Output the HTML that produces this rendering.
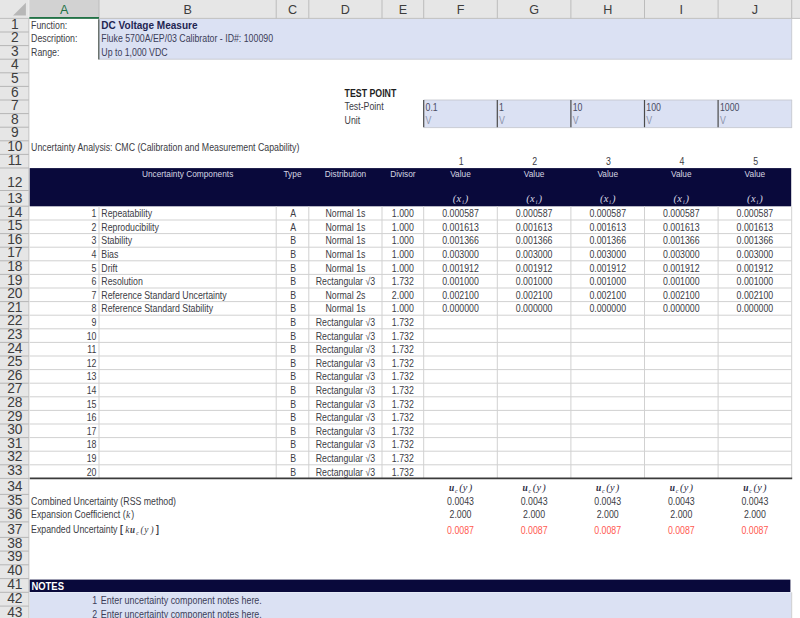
<!DOCTYPE html>
<html lang="en"><head><meta charset="utf-8"><title>Uncertainty Budget - DC Voltage Measure</title>
<style>
html,body{margin:0;padding:0;background:#fff;overflow:hidden}
svg{display:block}
text{font-family:"Liberation Sans",Arial,sans-serif;font-size:10.3px;fill:#3c3c44;white-space:pre}
.se,.se tspan{font-family:"Liberation Serif","Times New Roman",serif;font-style:italic}
</style></head><body>
<svg width="800" height="618" viewBox="0 0 800 618">
<rect x="0.00" y="0.00" width="800.00" height="618.00" fill="#ffffff" />
<rect x="99.00" y="19.00" width="692.70" height="40.20" fill="#dbe1f3" />
<rect x="423.70" y="100.00" width="368.00" height="27.60" fill="#dbe1f3" />
<rect x="29.40" y="592.30" width="762.30" height="25.70" fill="#dbe1f3" />
<rect x="29.40" y="168.10" width="761.80" height="38.20" fill="#09093b" />
<rect x="29.40" y="579.60" width="761.00" height="12.40" fill="#09093b" />
<line x1="29.40" y1="220.00" x2="791.70" y2="220.00" stroke="#d1d1d1" stroke-width="1.0"/>
<line x1="29.40" y1="233.60" x2="791.70" y2="233.60" stroke="#d1d1d1" stroke-width="1.0"/>
<line x1="29.40" y1="247.20" x2="791.70" y2="247.20" stroke="#d1d1d1" stroke-width="1.0"/>
<line x1="29.40" y1="260.80" x2="791.70" y2="260.80" stroke="#d1d1d1" stroke-width="1.0"/>
<line x1="29.40" y1="274.40" x2="791.70" y2="274.40" stroke="#d1d1d1" stroke-width="1.0"/>
<line x1="29.40" y1="288.00" x2="791.70" y2="288.00" stroke="#d1d1d1" stroke-width="1.0"/>
<line x1="29.40" y1="301.60" x2="791.70" y2="301.60" stroke="#d1d1d1" stroke-width="1.0"/>
<line x1="29.40" y1="315.20" x2="791.70" y2="315.20" stroke="#d1d1d1" stroke-width="1.0"/>
<line x1="29.40" y1="328.80" x2="791.70" y2="328.80" stroke="#d1d1d1" stroke-width="1.0"/>
<line x1="29.40" y1="342.40" x2="791.70" y2="342.40" stroke="#d1d1d1" stroke-width="1.0"/>
<line x1="29.40" y1="356.00" x2="791.70" y2="356.00" stroke="#d1d1d1" stroke-width="1.0"/>
<line x1="29.40" y1="369.60" x2="791.70" y2="369.60" stroke="#d1d1d1" stroke-width="1.0"/>
<line x1="29.40" y1="383.20" x2="791.70" y2="383.20" stroke="#d1d1d1" stroke-width="1.0"/>
<line x1="29.40" y1="396.80" x2="791.70" y2="396.80" stroke="#d1d1d1" stroke-width="1.0"/>
<line x1="29.40" y1="410.40" x2="791.70" y2="410.40" stroke="#d1d1d1" stroke-width="1.0"/>
<line x1="29.40" y1="424.00" x2="791.70" y2="424.00" stroke="#d1d1d1" stroke-width="1.0"/>
<line x1="29.40" y1="437.60" x2="791.70" y2="437.60" stroke="#d1d1d1" stroke-width="1.0"/>
<line x1="29.40" y1="451.20" x2="791.70" y2="451.20" stroke="#d1d1d1" stroke-width="1.0"/>
<line x1="29.40" y1="464.80" x2="791.70" y2="464.80" stroke="#d1d1d1" stroke-width="1.0"/>
<line x1="99.00" y1="206.40" x2="99.00" y2="478.40" stroke="#d1d1d1" stroke-width="1.0"/>
<line x1="276.20" y1="206.40" x2="276.20" y2="478.40" stroke="#d1d1d1" stroke-width="1.0"/>
<line x1="308.80" y1="206.40" x2="308.80" y2="478.40" stroke="#d1d1d1" stroke-width="1.0"/>
<line x1="382.00" y1="206.40" x2="382.00" y2="478.40" stroke="#d1d1d1" stroke-width="1.0"/>
<line x1="423.70" y1="206.40" x2="423.70" y2="478.40" stroke="#d1d1d1" stroke-width="1.0"/>
<line x1="497.30" y1="206.40" x2="497.30" y2="478.40" stroke="#d1d1d1" stroke-width="1.0"/>
<line x1="570.90" y1="206.40" x2="570.90" y2="478.40" stroke="#d1d1d1" stroke-width="1.0"/>
<line x1="644.50" y1="206.40" x2="644.50" y2="478.40" stroke="#d1d1d1" stroke-width="1.0"/>
<line x1="718.10" y1="206.40" x2="718.10" y2="478.40" stroke="#d1d1d1" stroke-width="1.0"/>
<line x1="791.70" y1="206.40" x2="791.70" y2="478.40" stroke="#d1d1d1" stroke-width="1.0"/>
<line x1="29.40" y1="478.40" x2="792.20" y2="478.40" stroke="#3a3a3a" stroke-width="1.6"/>
<line x1="791.70" y1="19.00" x2="791.70" y2="59.20" stroke="#c6c8d0" stroke-width="0.9"/>
<line x1="99.00" y1="59.20" x2="792.10" y2="59.20" stroke="#c6c8d0" stroke-width="0.9"/>
<line x1="791.70" y1="100.00" x2="791.70" y2="127.60" stroke="#c6c8d0" stroke-width="0.9"/>
<line x1="423.70" y1="127.60" x2="792.10" y2="127.60" stroke="#c6c8d0" stroke-width="0.9"/>
<line x1="423.70" y1="100.00" x2="792.10" y2="100.00" stroke="#c6c8d0" stroke-width="0.9"/>
<line x1="791.70" y1="592.30" x2="791.70" y2="618.00" stroke="#cfcfcf" stroke-width="1.0"/>
<line x1="98.80" y1="19.20" x2="98.80" y2="59.50" stroke="#46504a" stroke-width="1.2"/>
<line x1="423.70" y1="100.00" x2="423.70" y2="127.20" stroke="#4a4a4a" stroke-width="1.2"/>
<line x1="497.30" y1="100.00" x2="497.30" y2="127.20" stroke="#4a4a4a" stroke-width="1.2"/>
<line x1="570.90" y1="100.00" x2="570.90" y2="127.20" stroke="#4a4a4a" stroke-width="1.2"/>
<line x1="644.50" y1="100.00" x2="644.50" y2="127.20" stroke="#4a4a4a" stroke-width="1.2"/>
<line x1="718.10" y1="100.00" x2="718.10" y2="127.20" stroke="#4a4a4a" stroke-width="1.2"/>
<rect x="0.00" y="0.00" width="800.00" height="18.40" fill="#e6e6e6" />
<rect x="0.00" y="0.00" width="28.60" height="618.00" fill="#e6e6e6" />
<rect x="28.60" y="0.00" width="0.80" height="618.00" fill="#f2f2f2" />
<rect x="29.40" y="0.00" width="69.60" height="18.40" fill="#d2d2d2" />
<line x1="0.00" y1="18.40" x2="800.00" y2="18.40" stroke="#b9b9b9" stroke-width="0.9"/>
<line x1="99.00" y1="0.00" x2="99.00" y2="18.40" stroke="#bcbcbc" stroke-width="1"/>
<line x1="276.20" y1="0.00" x2="276.20" y2="18.40" stroke="#bcbcbc" stroke-width="1"/>
<line x1="308.80" y1="0.00" x2="308.80" y2="18.40" stroke="#bcbcbc" stroke-width="1"/>
<line x1="382.00" y1="0.00" x2="382.00" y2="18.40" stroke="#bcbcbc" stroke-width="1"/>
<line x1="423.70" y1="0.00" x2="423.70" y2="18.40" stroke="#bcbcbc" stroke-width="1"/>
<line x1="497.30" y1="0.00" x2="497.30" y2="18.40" stroke="#bcbcbc" stroke-width="1"/>
<line x1="570.90" y1="0.00" x2="570.90" y2="18.40" stroke="#bcbcbc" stroke-width="1"/>
<line x1="644.50" y1="0.00" x2="644.50" y2="18.40" stroke="#bcbcbc" stroke-width="1"/>
<line x1="718.10" y1="0.00" x2="718.10" y2="18.40" stroke="#bcbcbc" stroke-width="1"/>
<line x1="791.70" y1="0.00" x2="791.70" y2="18.40" stroke="#bcbcbc" stroke-width="1"/>
<line x1="28.80" y1="18.40" x2="28.80" y2="618.00" stroke="#c2c2c2" stroke-width="1"/>
<line x1="0.00" y1="32.00" x2="28.80" y2="32.00" stroke="#b6b6b6" stroke-width="1"/>
<line x1="0.00" y1="45.60" x2="28.80" y2="45.60" stroke="#b6b6b6" stroke-width="1"/>
<line x1="0.00" y1="59.20" x2="28.80" y2="59.20" stroke="#b6b6b6" stroke-width="1"/>
<line x1="0.00" y1="72.80" x2="28.80" y2="72.80" stroke="#b6b6b6" stroke-width="1"/>
<line x1="0.00" y1="86.40" x2="28.80" y2="86.40" stroke="#b6b6b6" stroke-width="1"/>
<line x1="0.00" y1="100.00" x2="28.80" y2="100.00" stroke="#b6b6b6" stroke-width="1"/>
<line x1="0.00" y1="113.60" x2="28.80" y2="113.60" stroke="#b6b6b6" stroke-width="1"/>
<line x1="0.00" y1="127.20" x2="28.80" y2="127.20" stroke="#b6b6b6" stroke-width="1"/>
<line x1="0.00" y1="140.80" x2="28.80" y2="140.80" stroke="#b6b6b6" stroke-width="1"/>
<line x1="0.00" y1="154.40" x2="28.80" y2="154.40" stroke="#b6b6b6" stroke-width="1"/>
<line x1="0.00" y1="168.00" x2="28.80" y2="168.00" stroke="#b6b6b6" stroke-width="1"/>
<line x1="0.00" y1="190.50" x2="28.80" y2="190.50" stroke="#b6b6b6" stroke-width="1"/>
<line x1="0.00" y1="206.20" x2="28.80" y2="206.20" stroke="#b6b6b6" stroke-width="1"/>
<line x1="0.00" y1="220.00" x2="28.80" y2="220.00" stroke="#b6b6b6" stroke-width="1"/>
<line x1="0.00" y1="233.60" x2="28.80" y2="233.60" stroke="#b6b6b6" stroke-width="1"/>
<line x1="0.00" y1="247.20" x2="28.80" y2="247.20" stroke="#b6b6b6" stroke-width="1"/>
<line x1="0.00" y1="260.80" x2="28.80" y2="260.80" stroke="#b6b6b6" stroke-width="1"/>
<line x1="0.00" y1="274.40" x2="28.80" y2="274.40" stroke="#b6b6b6" stroke-width="1"/>
<line x1="0.00" y1="288.00" x2="28.80" y2="288.00" stroke="#b6b6b6" stroke-width="1"/>
<line x1="0.00" y1="301.60" x2="28.80" y2="301.60" stroke="#b6b6b6" stroke-width="1"/>
<line x1="0.00" y1="315.20" x2="28.80" y2="315.20" stroke="#b6b6b6" stroke-width="1"/>
<line x1="0.00" y1="328.80" x2="28.80" y2="328.80" stroke="#b6b6b6" stroke-width="1"/>
<line x1="0.00" y1="342.40" x2="28.80" y2="342.40" stroke="#b6b6b6" stroke-width="1"/>
<line x1="0.00" y1="356.00" x2="28.80" y2="356.00" stroke="#b6b6b6" stroke-width="1"/>
<line x1="0.00" y1="369.60" x2="28.80" y2="369.60" stroke="#b6b6b6" stroke-width="1"/>
<line x1="0.00" y1="383.20" x2="28.80" y2="383.20" stroke="#b6b6b6" stroke-width="1"/>
<line x1="0.00" y1="396.80" x2="28.80" y2="396.80" stroke="#b6b6b6" stroke-width="1"/>
<line x1="0.00" y1="410.40" x2="28.80" y2="410.40" stroke="#b6b6b6" stroke-width="1"/>
<line x1="0.00" y1="424.00" x2="28.80" y2="424.00" stroke="#b6b6b6" stroke-width="1"/>
<line x1="0.00" y1="437.60" x2="28.80" y2="437.60" stroke="#b6b6b6" stroke-width="1"/>
<line x1="0.00" y1="451.20" x2="28.80" y2="451.20" stroke="#b6b6b6" stroke-width="1"/>
<line x1="0.00" y1="464.80" x2="28.80" y2="464.80" stroke="#b6b6b6" stroke-width="1"/>
<line x1="0.00" y1="478.40" x2="28.80" y2="478.40" stroke="#b6b6b6" stroke-width="1"/>
<line x1="0.00" y1="494.40" x2="28.80" y2="494.40" stroke="#b6b6b6" stroke-width="1"/>
<line x1="0.00" y1="508.20" x2="28.80" y2="508.20" stroke="#b6b6b6" stroke-width="1"/>
<line x1="0.00" y1="521.90" x2="28.80" y2="521.90" stroke="#b6b6b6" stroke-width="1"/>
<line x1="0.00" y1="537.40" x2="28.80" y2="537.40" stroke="#b6b6b6" stroke-width="1"/>
<line x1="0.00" y1="551.10" x2="28.80" y2="551.10" stroke="#b6b6b6" stroke-width="1"/>
<line x1="0.00" y1="564.80" x2="28.80" y2="564.80" stroke="#b6b6b6" stroke-width="1"/>
<line x1="0.00" y1="578.60" x2="28.80" y2="578.60" stroke="#b6b6b6" stroke-width="1"/>
<line x1="0.00" y1="592.30" x2="28.80" y2="592.30" stroke="#b6b6b6" stroke-width="1"/>
<line x1="0.00" y1="606.10" x2="28.80" y2="606.10" stroke="#b6b6b6" stroke-width="1"/>
<line x1="0.00" y1="619.90" x2="28.80" y2="619.90" stroke="#b6b6b6" stroke-width="1"/>
<rect x="29.40" y="17.00" width="69.60" height="1.80" fill="#217346" />
<polygon points="25.9,2.8 25.9,15.6 13.1,15.6" fill="#b7b7b7"/>
<text transform="translate(64.20,13.50) scale(0.97,1)" text-anchor="middle" style="font-size:13px;fill:#217346;">A</text>
<text transform="translate(187.60,13.50) scale(0.97,1)" text-anchor="middle" style="font-size:13px;fill:#3d3d3d;">B</text>
<text transform="translate(292.50,13.50) scale(0.97,1)" text-anchor="middle" style="font-size:13px;fill:#3d3d3d;">C</text>
<text transform="translate(345.40,13.50) scale(0.97,1)" text-anchor="middle" style="font-size:13px;fill:#3d3d3d;">D</text>
<text transform="translate(402.85,13.50) scale(0.97,1)" text-anchor="middle" style="font-size:13px;fill:#3d3d3d;">E</text>
<text transform="translate(460.50,13.50) scale(0.97,1)" text-anchor="middle" style="font-size:13px;fill:#3d3d3d;">F</text>
<text transform="translate(534.10,13.50) scale(0.97,1)" text-anchor="middle" style="font-size:13px;fill:#3d3d3d;">G</text>
<text transform="translate(607.70,13.50) scale(0.97,1)" text-anchor="middle" style="font-size:13px;fill:#3d3d3d;">H</text>
<text transform="translate(681.30,13.50) scale(0.97,1)" text-anchor="middle" style="font-size:13px;fill:#3d3d3d;">I</text>
<text transform="translate(754.90,13.50) scale(0.97,1)" text-anchor="middle" style="font-size:13px;fill:#3d3d3d;">J</text>
<text transform="translate(14.80,28.60) scale(1.0,1)" text-anchor="middle" style="font-size:13.8px;fill:#3d3d3d;">1</text>
<text transform="translate(14.80,42.20) scale(1.0,1)" text-anchor="middle" style="font-size:13.8px;fill:#3d3d3d;">2</text>
<text transform="translate(14.80,55.80) scale(1.0,1)" text-anchor="middle" style="font-size:13.8px;fill:#3d3d3d;">3</text>
<text transform="translate(14.80,69.40) scale(1.0,1)" text-anchor="middle" style="font-size:13.8px;fill:#3d3d3d;">4</text>
<text transform="translate(14.80,83.00) scale(1.0,1)" text-anchor="middle" style="font-size:13.8px;fill:#3d3d3d;">5</text>
<text transform="translate(14.80,96.60) scale(1.0,1)" text-anchor="middle" style="font-size:13.8px;fill:#3d3d3d;">6</text>
<text transform="translate(14.80,110.20) scale(1.0,1)" text-anchor="middle" style="font-size:13.8px;fill:#3d3d3d;">7</text>
<text transform="translate(14.80,123.80) scale(1.0,1)" text-anchor="middle" style="font-size:13.8px;fill:#3d3d3d;">8</text>
<text transform="translate(14.80,137.40) scale(1.0,1)" text-anchor="middle" style="font-size:13.8px;fill:#3d3d3d;">9</text>
<text transform="translate(14.80,151.00) scale(1.0,1)" text-anchor="middle" style="font-size:13.8px;fill:#3d3d3d;">10</text>
<text transform="translate(14.80,164.60) scale(1.0,1)" text-anchor="middle" style="font-size:13.8px;fill:#3d3d3d;">11</text>
<text transform="translate(14.80,187.10) scale(1.0,1)" text-anchor="middle" style="font-size:13.8px;fill:#3d3d3d;">12</text>
<text transform="translate(14.80,202.80) scale(1.0,1)" text-anchor="middle" style="font-size:13.8px;fill:#3d3d3d;">13</text>
<text transform="translate(14.80,216.60) scale(1.0,1)" text-anchor="middle" style="font-size:13.8px;fill:#3d3d3d;">14</text>
<text transform="translate(14.80,230.20) scale(1.0,1)" text-anchor="middle" style="font-size:13.8px;fill:#3d3d3d;">15</text>
<text transform="translate(14.80,243.80) scale(1.0,1)" text-anchor="middle" style="font-size:13.8px;fill:#3d3d3d;">16</text>
<text transform="translate(14.80,257.40) scale(1.0,1)" text-anchor="middle" style="font-size:13.8px;fill:#3d3d3d;">17</text>
<text transform="translate(14.80,271.00) scale(1.0,1)" text-anchor="middle" style="font-size:13.8px;fill:#3d3d3d;">18</text>
<text transform="translate(14.80,284.60) scale(1.0,1)" text-anchor="middle" style="font-size:13.8px;fill:#3d3d3d;">19</text>
<text transform="translate(14.80,298.20) scale(1.0,1)" text-anchor="middle" style="font-size:13.8px;fill:#3d3d3d;">20</text>
<text transform="translate(14.80,311.80) scale(1.0,1)" text-anchor="middle" style="font-size:13.8px;fill:#3d3d3d;">21</text>
<text transform="translate(14.80,325.40) scale(1.0,1)" text-anchor="middle" style="font-size:13.8px;fill:#3d3d3d;">22</text>
<text transform="translate(14.80,339.00) scale(1.0,1)" text-anchor="middle" style="font-size:13.8px;fill:#3d3d3d;">23</text>
<text transform="translate(14.80,352.60) scale(1.0,1)" text-anchor="middle" style="font-size:13.8px;fill:#3d3d3d;">24</text>
<text transform="translate(14.80,366.20) scale(1.0,1)" text-anchor="middle" style="font-size:13.8px;fill:#3d3d3d;">25</text>
<text transform="translate(14.80,379.80) scale(1.0,1)" text-anchor="middle" style="font-size:13.8px;fill:#3d3d3d;">26</text>
<text transform="translate(14.80,393.40) scale(1.0,1)" text-anchor="middle" style="font-size:13.8px;fill:#3d3d3d;">27</text>
<text transform="translate(14.80,407.00) scale(1.0,1)" text-anchor="middle" style="font-size:13.8px;fill:#3d3d3d;">28</text>
<text transform="translate(14.80,420.60) scale(1.0,1)" text-anchor="middle" style="font-size:13.8px;fill:#3d3d3d;">29</text>
<text transform="translate(14.80,434.20) scale(1.0,1)" text-anchor="middle" style="font-size:13.8px;fill:#3d3d3d;">30</text>
<text transform="translate(14.80,447.80) scale(1.0,1)" text-anchor="middle" style="font-size:13.8px;fill:#3d3d3d;">31</text>
<text transform="translate(14.80,461.40) scale(1.0,1)" text-anchor="middle" style="font-size:13.8px;fill:#3d3d3d;">32</text>
<text transform="translate(14.80,475.00) scale(1.0,1)" text-anchor="middle" style="font-size:13.8px;fill:#3d3d3d;">33</text>
<text transform="translate(14.80,491.00) scale(1.0,1)" text-anchor="middle" style="font-size:13.8px;fill:#3d3d3d;">34</text>
<text transform="translate(14.80,504.80) scale(1.0,1)" text-anchor="middle" style="font-size:13.8px;fill:#3d3d3d;">35</text>
<text transform="translate(14.80,518.50) scale(1.0,1)" text-anchor="middle" style="font-size:13.8px;fill:#3d3d3d;">36</text>
<text transform="translate(14.80,534.00) scale(1.0,1)" text-anchor="middle" style="font-size:13.8px;fill:#3d3d3d;">37</text>
<text transform="translate(14.80,547.70) scale(1.0,1)" text-anchor="middle" style="font-size:13.8px;fill:#3d3d3d;">38</text>
<text transform="translate(14.80,561.40) scale(1.0,1)" text-anchor="middle" style="font-size:13.8px;fill:#3d3d3d;">39</text>
<text transform="translate(14.80,575.20) scale(1.0,1)" text-anchor="middle" style="font-size:13.8px;fill:#3d3d3d;">40</text>
<text transform="translate(14.80,588.90) scale(1.0,1)" text-anchor="middle" style="font-size:13.8px;fill:#3d3d3d;">41</text>
<text transform="translate(14.80,602.70) scale(1.0,1)" text-anchor="middle" style="font-size:13.8px;fill:#3d3d3d;">42</text>
<text transform="translate(14.80,616.50) scale(1.0,1)" text-anchor="middle" style="font-size:13.8px;fill:#3d3d3d;">43</text>
<text transform="translate(31.10,28.80) scale(0.853,1)">Function:</text>
<text transform="translate(31.10,42.40) scale(0.853,1)">Description:</text>
<text transform="translate(31.10,56.00) scale(0.853,1)">Range:</text>
<text transform="translate(101.30,28.80) scale(0.975,1)" style="font-weight:bold;fill:#1f2552;">DC Voltage Measure</text>
<text transform="translate(101.30,42.40) scale(0.853,1)" style="fill:#3b3d58;">Fluke 5700A/EP/03 Calibrator - ID#: 100090</text>
<text transform="translate(101.30,56.00) scale(0.853,1)" style="fill:#3b3d58;">Up to 1,000 VDC</text>
<text transform="translate(344.60,96.60) scale(0.853,1)" style="font-weight:bold;fill:#1e1e1e;">TEST POINT</text>
<text transform="translate(344.60,110.40) scale(0.853,1)">Test-Point</text>
<text transform="translate(344.60,124.00) scale(0.853,1)">Unit</text>
<text transform="translate(425.50,111.10) scale(0.853,1)" style="fill:#4a4d63;">0.1</text>
<text transform="translate(425.50,124.00) scale(0.853,1)" style="fill:#8c93ab;">V</text>
<text transform="translate(499.10,111.10) scale(0.853,1)" style="fill:#4a4d63;">1</text>
<text transform="translate(499.10,124.00) scale(0.853,1)" style="fill:#8c93ab;">V</text>
<text transform="translate(572.70,111.10) scale(0.853,1)" style="fill:#4a4d63;">10</text>
<text transform="translate(572.70,124.00) scale(0.853,1)" style="fill:#8c93ab;">V</text>
<text transform="translate(646.30,111.10) scale(0.853,1)" style="fill:#4a4d63;">100</text>
<text transform="translate(646.30,124.00) scale(0.853,1)" style="fill:#8c93ab;">V</text>
<text transform="translate(719.90,111.10) scale(0.853,1)" style="fill:#4a4d63;">1000</text>
<text transform="translate(719.90,124.00) scale(0.853,1)" style="fill:#8c93ab;">V</text>
<text transform="translate(31.10,151.20) scale(0.853,1)">Uncertainty Analysis: CMC (Calibration and Measurement Capability)</text>
<text transform="translate(461.20,164.80) scale(0.853,1)" text-anchor="middle">1</text>
<text transform="translate(534.80,164.80) scale(0.853,1)" text-anchor="middle">2</text>
<text transform="translate(608.40,164.80) scale(0.853,1)" text-anchor="middle">3</text>
<text transform="translate(682.00,164.80) scale(0.853,1)" text-anchor="middle">4</text>
<text transform="translate(755.60,164.80) scale(0.853,1)" text-anchor="middle">5</text>
<text transform="translate(187.60,177.20) scale(0.885,1)" text-anchor="middle" style="font-size:9.4px;fill:#d6d6e2;">Uncertainty Components</text>
<text transform="translate(292.50,177.20) scale(0.885,1)" text-anchor="middle" style="font-size:9.4px;fill:#d6d6e2;">Type</text>
<text transform="translate(345.40,177.20) scale(0.885,1)" text-anchor="middle" style="font-size:9.4px;fill:#d6d6e2;">Distribution</text>
<text transform="translate(402.85,177.20) scale(0.885,1)" text-anchor="middle" style="font-size:9.4px;fill:#d6d6e2;">Divisor</text>
<text transform="translate(460.50,177.20) scale(0.885,1)" text-anchor="middle" style="font-size:9.4px;fill:#d6d6e2;">Value</text>
<text transform="translate(460.50,202.30) scale(1,1)" text-anchor="middle" class="se" style="font-size:10.5px;fill:#d6d6e2;">(<tspan dx="0.3">x</tspan><tspan dy="1.8" dx="1" style="font-size:6px">i</tspan><tspan dy="-1.8" dx="1">)</tspan></text>
<text transform="translate(534.10,177.20) scale(0.885,1)" text-anchor="middle" style="font-size:9.4px;fill:#d6d6e2;">Value</text>
<text transform="translate(534.10,202.30) scale(1,1)" text-anchor="middle" class="se" style="font-size:10.5px;fill:#d6d6e2;">(<tspan dx="0.3">x</tspan><tspan dy="1.8" dx="1" style="font-size:6px">i</tspan><tspan dy="-1.8" dx="1">)</tspan></text>
<text transform="translate(607.70,177.20) scale(0.885,1)" text-anchor="middle" style="font-size:9.4px;fill:#d6d6e2;">Value</text>
<text transform="translate(607.70,202.30) scale(1,1)" text-anchor="middle" class="se" style="font-size:10.5px;fill:#d6d6e2;">(<tspan dx="0.3">x</tspan><tspan dy="1.8" dx="1" style="font-size:6px">i</tspan><tspan dy="-1.8" dx="1">)</tspan></text>
<text transform="translate(681.30,177.20) scale(0.885,1)" text-anchor="middle" style="font-size:9.4px;fill:#d6d6e2;">Value</text>
<text transform="translate(681.30,202.30) scale(1,1)" text-anchor="middle" class="se" style="font-size:10.5px;fill:#d6d6e2;">(<tspan dx="0.3">x</tspan><tspan dy="1.8" dx="1" style="font-size:6px">i</tspan><tspan dy="-1.8" dx="1">)</tspan></text>
<text transform="translate(754.90,177.20) scale(0.885,1)" text-anchor="middle" style="font-size:9.4px;fill:#d6d6e2;">Value</text>
<text transform="translate(754.90,202.30) scale(1,1)" text-anchor="middle" class="se" style="font-size:10.5px;fill:#d6d6e2;">(<tspan dx="0.3">x</tspan><tspan dy="1.8" dx="1" style="font-size:6px">i</tspan><tspan dy="-1.8" dx="1">)</tspan></text>
<text transform="translate(96.40,217.20) scale(0.853,1)" text-anchor="end">1</text>
<text transform="translate(101.30,217.20) scale(0.853,1)">Repeatability</text>
<text transform="translate(293.10,217.20) scale(0.853,1)" text-anchor="middle">A</text>
<text transform="translate(345.40,217.20) scale(0.853,1)" text-anchor="middle">Normal 1s</text>
<text transform="translate(402.85,217.20) scale(0.853,1)" text-anchor="middle">1.000</text>
<text transform="translate(460.50,217.20) scale(0.853,1)" text-anchor="middle">0.000587</text>
<text transform="translate(534.10,217.20) scale(0.853,1)" text-anchor="middle">0.000587</text>
<text transform="translate(607.70,217.20) scale(0.853,1)" text-anchor="middle">0.000587</text>
<text transform="translate(681.30,217.20) scale(0.853,1)" text-anchor="middle">0.000587</text>
<text transform="translate(754.90,217.20) scale(0.853,1)" text-anchor="middle">0.000587</text>
<text transform="translate(96.40,230.80) scale(0.853,1)" text-anchor="end">2</text>
<text transform="translate(101.30,230.80) scale(0.853,1)">Reproducibility</text>
<text transform="translate(293.10,230.80) scale(0.853,1)" text-anchor="middle">A</text>
<text transform="translate(345.40,230.80) scale(0.853,1)" text-anchor="middle">Normal 1s</text>
<text transform="translate(402.85,230.80) scale(0.853,1)" text-anchor="middle">1.000</text>
<text transform="translate(460.50,230.80) scale(0.853,1)" text-anchor="middle">0.001613</text>
<text transform="translate(534.10,230.80) scale(0.853,1)" text-anchor="middle">0.001613</text>
<text transform="translate(607.70,230.80) scale(0.853,1)" text-anchor="middle">0.001613</text>
<text transform="translate(681.30,230.80) scale(0.853,1)" text-anchor="middle">0.001613</text>
<text transform="translate(754.90,230.80) scale(0.853,1)" text-anchor="middle">0.001613</text>
<text transform="translate(96.40,244.40) scale(0.853,1)" text-anchor="end">3</text>
<text transform="translate(101.30,244.40) scale(0.853,1)">Stability</text>
<text transform="translate(293.10,244.40) scale(0.853,1)" text-anchor="middle">B</text>
<text transform="translate(345.40,244.40) scale(0.853,1)" text-anchor="middle">Normal 1s</text>
<text transform="translate(402.85,244.40) scale(0.853,1)" text-anchor="middle">1.000</text>
<text transform="translate(460.50,244.40) scale(0.853,1)" text-anchor="middle">0.001366</text>
<text transform="translate(534.10,244.40) scale(0.853,1)" text-anchor="middle">0.001366</text>
<text transform="translate(607.70,244.40) scale(0.853,1)" text-anchor="middle">0.001366</text>
<text transform="translate(681.30,244.40) scale(0.853,1)" text-anchor="middle">0.001366</text>
<text transform="translate(754.90,244.40) scale(0.853,1)" text-anchor="middle">0.001366</text>
<text transform="translate(96.40,258.00) scale(0.853,1)" text-anchor="end">4</text>
<text transform="translate(101.30,258.00) scale(0.853,1)">Bias</text>
<text transform="translate(293.10,258.00) scale(0.853,1)" text-anchor="middle">B</text>
<text transform="translate(345.40,258.00) scale(0.853,1)" text-anchor="middle">Normal 1s</text>
<text transform="translate(402.85,258.00) scale(0.853,1)" text-anchor="middle">1.000</text>
<text transform="translate(460.50,258.00) scale(0.853,1)" text-anchor="middle">0.003000</text>
<text transform="translate(534.10,258.00) scale(0.853,1)" text-anchor="middle">0.003000</text>
<text transform="translate(607.70,258.00) scale(0.853,1)" text-anchor="middle">0.003000</text>
<text transform="translate(681.30,258.00) scale(0.853,1)" text-anchor="middle">0.003000</text>
<text transform="translate(754.90,258.00) scale(0.853,1)" text-anchor="middle">0.003000</text>
<text transform="translate(96.40,271.60) scale(0.853,1)" text-anchor="end">5</text>
<text transform="translate(101.30,271.60) scale(0.853,1)">Drift</text>
<text transform="translate(293.10,271.60) scale(0.853,1)" text-anchor="middle">B</text>
<text transform="translate(345.40,271.60) scale(0.853,1)" text-anchor="middle">Normal 1s</text>
<text transform="translate(402.85,271.60) scale(0.853,1)" text-anchor="middle">1.000</text>
<text transform="translate(460.50,271.60) scale(0.853,1)" text-anchor="middle">0.001912</text>
<text transform="translate(534.10,271.60) scale(0.853,1)" text-anchor="middle">0.001912</text>
<text transform="translate(607.70,271.60) scale(0.853,1)" text-anchor="middle">0.001912</text>
<text transform="translate(681.30,271.60) scale(0.853,1)" text-anchor="middle">0.001912</text>
<text transform="translate(754.90,271.60) scale(0.853,1)" text-anchor="middle">0.001912</text>
<text transform="translate(96.40,285.20) scale(0.853,1)" text-anchor="end">6</text>
<text transform="translate(101.30,285.20) scale(0.853,1)">Resolution</text>
<text transform="translate(293.10,285.20) scale(0.853,1)" text-anchor="middle">B</text>
<text transform="translate(345.40,285.20) scale(0.853,1)" text-anchor="middle">Rectangular √3</text>
<text transform="translate(402.85,285.20) scale(0.853,1)" text-anchor="middle">1.732</text>
<text transform="translate(460.50,285.20) scale(0.853,1)" text-anchor="middle">0.001000</text>
<text transform="translate(534.10,285.20) scale(0.853,1)" text-anchor="middle">0.001000</text>
<text transform="translate(607.70,285.20) scale(0.853,1)" text-anchor="middle">0.001000</text>
<text transform="translate(681.30,285.20) scale(0.853,1)" text-anchor="middle">0.001000</text>
<text transform="translate(754.90,285.20) scale(0.853,1)" text-anchor="middle">0.001000</text>
<text transform="translate(96.40,298.80) scale(0.853,1)" text-anchor="end">7</text>
<text transform="translate(101.30,298.80) scale(0.853,1)">Reference Standard Uncertainty</text>
<text transform="translate(293.10,298.80) scale(0.853,1)" text-anchor="middle">B</text>
<text transform="translate(345.40,298.80) scale(0.853,1)" text-anchor="middle">Normal 2s</text>
<text transform="translate(402.85,298.80) scale(0.853,1)" text-anchor="middle">2.000</text>
<text transform="translate(460.50,298.80) scale(0.853,1)" text-anchor="middle">0.002100</text>
<text transform="translate(534.10,298.80) scale(0.853,1)" text-anchor="middle">0.002100</text>
<text transform="translate(607.70,298.80) scale(0.853,1)" text-anchor="middle">0.002100</text>
<text transform="translate(681.30,298.80) scale(0.853,1)" text-anchor="middle">0.002100</text>
<text transform="translate(754.90,298.80) scale(0.853,1)" text-anchor="middle">0.002100</text>
<text transform="translate(96.40,312.40) scale(0.853,1)" text-anchor="end">8</text>
<text transform="translate(101.30,312.40) scale(0.853,1)">Reference Standard Stability</text>
<text transform="translate(293.10,312.40) scale(0.853,1)" text-anchor="middle">B</text>
<text transform="translate(345.40,312.40) scale(0.853,1)" text-anchor="middle">Normal 1s</text>
<text transform="translate(402.85,312.40) scale(0.853,1)" text-anchor="middle">1.000</text>
<text transform="translate(460.50,312.40) scale(0.853,1)" text-anchor="middle">0.000000</text>
<text transform="translate(534.10,312.40) scale(0.853,1)" text-anchor="middle">0.000000</text>
<text transform="translate(607.70,312.40) scale(0.853,1)" text-anchor="middle">0.000000</text>
<text transform="translate(681.30,312.40) scale(0.853,1)" text-anchor="middle">0.000000</text>
<text transform="translate(754.90,312.40) scale(0.853,1)" text-anchor="middle">0.000000</text>
<text transform="translate(96.40,326.00) scale(0.853,1)" text-anchor="end">9</text>
<text transform="translate(293.10,326.00) scale(0.853,1)" text-anchor="middle">B</text>
<text transform="translate(345.40,326.00) scale(0.853,1)" text-anchor="middle">Rectangular √3</text>
<text transform="translate(402.85,326.00) scale(0.853,1)" text-anchor="middle">1.732</text>
<text transform="translate(96.40,339.60) scale(0.853,1)" text-anchor="end">10</text>
<text transform="translate(293.10,339.60) scale(0.853,1)" text-anchor="middle">B</text>
<text transform="translate(345.40,339.60) scale(0.853,1)" text-anchor="middle">Rectangular √3</text>
<text transform="translate(402.85,339.60) scale(0.853,1)" text-anchor="middle">1.732</text>
<text transform="translate(96.40,353.20) scale(0.853,1)" text-anchor="end">11</text>
<text transform="translate(293.10,353.20) scale(0.853,1)" text-anchor="middle">B</text>
<text transform="translate(345.40,353.20) scale(0.853,1)" text-anchor="middle">Rectangular √3</text>
<text transform="translate(402.85,353.20) scale(0.853,1)" text-anchor="middle">1.732</text>
<text transform="translate(96.40,366.80) scale(0.853,1)" text-anchor="end">12</text>
<text transform="translate(293.10,366.80) scale(0.853,1)" text-anchor="middle">B</text>
<text transform="translate(345.40,366.80) scale(0.853,1)" text-anchor="middle">Rectangular √3</text>
<text transform="translate(402.85,366.80) scale(0.853,1)" text-anchor="middle">1.732</text>
<text transform="translate(96.40,380.40) scale(0.853,1)" text-anchor="end">13</text>
<text transform="translate(293.10,380.40) scale(0.853,1)" text-anchor="middle">B</text>
<text transform="translate(345.40,380.40) scale(0.853,1)" text-anchor="middle">Rectangular √3</text>
<text transform="translate(402.85,380.40) scale(0.853,1)" text-anchor="middle">1.732</text>
<text transform="translate(96.40,394.00) scale(0.853,1)" text-anchor="end">14</text>
<text transform="translate(293.10,394.00) scale(0.853,1)" text-anchor="middle">B</text>
<text transform="translate(345.40,394.00) scale(0.853,1)" text-anchor="middle">Rectangular √3</text>
<text transform="translate(402.85,394.00) scale(0.853,1)" text-anchor="middle">1.732</text>
<text transform="translate(96.40,407.60) scale(0.853,1)" text-anchor="end">15</text>
<text transform="translate(293.10,407.60) scale(0.853,1)" text-anchor="middle">B</text>
<text transform="translate(345.40,407.60) scale(0.853,1)" text-anchor="middle">Rectangular √3</text>
<text transform="translate(402.85,407.60) scale(0.853,1)" text-anchor="middle">1.732</text>
<text transform="translate(96.40,421.20) scale(0.853,1)" text-anchor="end">16</text>
<text transform="translate(293.10,421.20) scale(0.853,1)" text-anchor="middle">B</text>
<text transform="translate(345.40,421.20) scale(0.853,1)" text-anchor="middle">Rectangular √3</text>
<text transform="translate(402.85,421.20) scale(0.853,1)" text-anchor="middle">1.732</text>
<text transform="translate(96.40,434.80) scale(0.853,1)" text-anchor="end">17</text>
<text transform="translate(293.10,434.80) scale(0.853,1)" text-anchor="middle">B</text>
<text transform="translate(345.40,434.80) scale(0.853,1)" text-anchor="middle">Rectangular √3</text>
<text transform="translate(402.85,434.80) scale(0.853,1)" text-anchor="middle">1.732</text>
<text transform="translate(96.40,448.40) scale(0.853,1)" text-anchor="end">18</text>
<text transform="translate(293.10,448.40) scale(0.853,1)" text-anchor="middle">B</text>
<text transform="translate(345.40,448.40) scale(0.853,1)" text-anchor="middle">Rectangular √3</text>
<text transform="translate(402.85,448.40) scale(0.853,1)" text-anchor="middle">1.732</text>
<text transform="translate(96.40,462.00) scale(0.853,1)" text-anchor="end">19</text>
<text transform="translate(293.10,462.00) scale(0.853,1)" text-anchor="middle">B</text>
<text transform="translate(345.40,462.00) scale(0.853,1)" text-anchor="middle">Rectangular √3</text>
<text transform="translate(402.85,462.00) scale(0.853,1)" text-anchor="middle">1.732</text>
<text transform="translate(96.40,475.60) scale(0.853,1)" text-anchor="end">20</text>
<text transform="translate(293.10,475.60) scale(0.853,1)" text-anchor="middle">B</text>
<text transform="translate(345.40,475.60) scale(0.853,1)" text-anchor="middle">Rectangular √3</text>
<text transform="translate(402.85,475.60) scale(0.853,1)" text-anchor="middle">1.732</text>
<text transform="translate(460.50,491.40) scale(1,1)" text-anchor="middle" class="se" style="font-size:10.4px;fill:#2b2b3f;"><tspan style="font-weight:bold;font-size:9.4px">u</tspan><tspan dy="1.8" dx="0.8" style="font-size:6px">c</tspan><tspan dy="-1.8" dx="1.6">(</tspan><tspan dx="0.2">y</tspan><tspan dx="1.2">)</tspan></text>
<text transform="translate(460.50,504.50) scale(0.853,1)" text-anchor="middle">0.0043</text>
<text transform="translate(460.50,518.00) scale(0.853,1)" text-anchor="middle">2.000</text>
<text transform="translate(460.50,534.20) scale(0.853,1)" text-anchor="middle" style="fill:#ff5a50;">0.0087</text>
<text transform="translate(534.10,491.40) scale(1,1)" text-anchor="middle" class="se" style="font-size:10.4px;fill:#2b2b3f;"><tspan style="font-weight:bold;font-size:9.4px">u</tspan><tspan dy="1.8" dx="0.8" style="font-size:6px">c</tspan><tspan dy="-1.8" dx="1.6">(</tspan><tspan dx="0.2">y</tspan><tspan dx="1.2">)</tspan></text>
<text transform="translate(534.10,504.50) scale(0.853,1)" text-anchor="middle">0.0043</text>
<text transform="translate(534.10,518.00) scale(0.853,1)" text-anchor="middle">2.000</text>
<text transform="translate(534.10,534.20) scale(0.853,1)" text-anchor="middle" style="fill:#ff5a50;">0.0087</text>
<text transform="translate(607.70,491.40) scale(1,1)" text-anchor="middle" class="se" style="font-size:10.4px;fill:#2b2b3f;"><tspan style="font-weight:bold;font-size:9.4px">u</tspan><tspan dy="1.8" dx="0.8" style="font-size:6px">c</tspan><tspan dy="-1.8" dx="1.6">(</tspan><tspan dx="0.2">y</tspan><tspan dx="1.2">)</tspan></text>
<text transform="translate(607.70,504.50) scale(0.853,1)" text-anchor="middle">0.0043</text>
<text transform="translate(607.70,518.00) scale(0.853,1)" text-anchor="middle">2.000</text>
<text transform="translate(607.70,534.20) scale(0.853,1)" text-anchor="middle" style="fill:#ff5a50;">0.0087</text>
<text transform="translate(681.30,491.40) scale(1,1)" text-anchor="middle" class="se" style="font-size:10.4px;fill:#2b2b3f;"><tspan style="font-weight:bold;font-size:9.4px">u</tspan><tspan dy="1.8" dx="0.8" style="font-size:6px">c</tspan><tspan dy="-1.8" dx="1.6">(</tspan><tspan dx="0.2">y</tspan><tspan dx="1.2">)</tspan></text>
<text transform="translate(681.30,504.50) scale(0.853,1)" text-anchor="middle">0.0043</text>
<text transform="translate(681.30,518.00) scale(0.853,1)" text-anchor="middle">2.000</text>
<text transform="translate(681.30,534.20) scale(0.853,1)" text-anchor="middle" style="fill:#ff5a50;">0.0087</text>
<text transform="translate(754.90,491.40) scale(1,1)" text-anchor="middle" class="se" style="font-size:10.4px;fill:#2b2b3f;"><tspan style="font-weight:bold;font-size:9.4px">u</tspan><tspan dy="1.8" dx="0.8" style="font-size:6px">c</tspan><tspan dy="-1.8" dx="1.6">(</tspan><tspan dx="0.2">y</tspan><tspan dx="1.2">)</tspan></text>
<text transform="translate(754.90,504.50) scale(0.853,1)" text-anchor="middle">0.0043</text>
<text transform="translate(754.90,518.00) scale(0.853,1)" text-anchor="middle">2.000</text>
<text transform="translate(754.90,534.20) scale(0.853,1)" text-anchor="middle" style="fill:#ff5a50;">0.0087</text>
<text transform="translate(31.10,504.50) scale(0.853,1)">Combined Uncertainty (RSS method)</text>
<text transform="translate(31.10,518.00) scale(0.853,1)">Expansion Coefficienct (<tspan class="se" dx="0.5" style="font-size:11px">k</tspan><tspan dx="1.3">)</tspan></text>
<text transform="translate(31.10,533.00) scale(0.853,1)">Expanded Uncertainty <tspan style="font-weight:bold">[</tspan> <tspan class="se" style="font-size:11px">k<tspan dx="0.6" style="font-weight:bold;font-size:10.5px">u</tspan></tspan><tspan class="se" dy="1.8" dx="1.5" style="font-size:6.5px">c</tspan><tspan class="se" dy="-1.8" dx="2.2" style="font-size:11px">(</tspan><tspan class="se" dx="0.8" style="font-size:11px">y</tspan><tspan class="se" dx="2.2" style="font-size:11px">)</tspan> <tspan style="font-weight:bold">]</tspan></text>
<text transform="translate(31.40,589.60) scale(0.92,1)" style="font-weight:bold;fill:#ffffff;">NOTES</text>
<text transform="translate(97.10,603.80) scale(0.853,1)" text-anchor="end" style="fill:#3b3d58;">1</text>
<text transform="translate(100.80,603.80) scale(0.866,1)" style="fill:#3b3d58;">Enter uncertainty component notes here.</text>
<text transform="translate(97.10,617.60) scale(0.853,1)" text-anchor="end" style="fill:#3b3d58;">2</text>
<text transform="translate(100.80,617.60) scale(0.866,1)" style="fill:#3b3d58;">Enter uncertainty component notes here.</text>
</svg>
</body></html>
